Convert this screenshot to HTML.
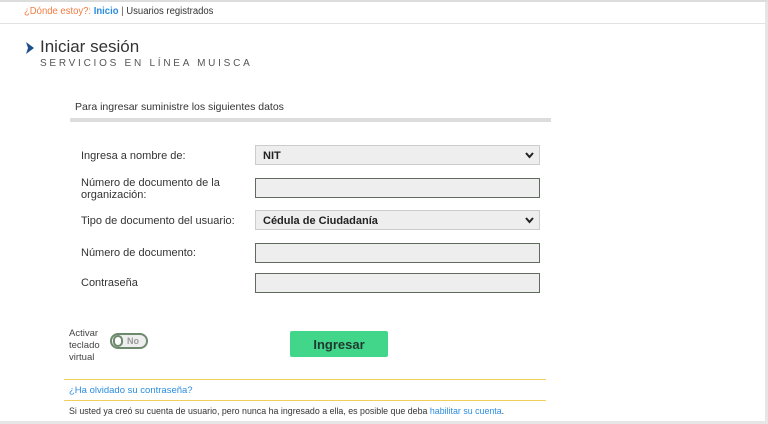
<!DOCTYPE html>
<html><head><meta charset="utf-8"><style>
*{margin:0;padding:0;box-sizing:border-box}
body{width:768px;height:424px;background:#fff;font-family:"Liberation Sans",sans-serif;position:relative;overflow:hidden;color:#333}
.a{position:absolute}
.lbl{font-size:11px;color:#333;left:81px}
.inp{left:255px;width:285px;height:20px;background:#eee;border:1px solid #5f6b5f}
.sel{left:255px;width:285px;height:20px;background:#eee;border:1px solid #ccc;font-size:11px;font-weight:bold;color:#222;padding:4px 0 0 7px}
.sel svg{position:absolute;right:5px;top:6px}
</style></head><body>
<div class="a" style="left:0;top:0;width:768px;height:2px;background:#ddd"></div>
<div class="a" style="left:0;top:23px;width:766px;height:1px;background:#e2e2e2"></div>
<div class="a" style="left:765px;top:2px;width:3px;height:422px;background:#e6e6e6"></div>
<div class="a" style="left:0;top:421px;width:768px;height:3px;background:#e6e6e6"></div>
<div class="a" style="left:24px;top:6px;font-size:10px;transform:scaleX(0.95);transform-origin:left"><span style="color:#f47c43">¿Dónde estoy?:</span> <span style="color:#2b8de0;font-weight:bold">Inicio</span> <span style="color:#555">|</span> <span style="color:#333">Usuarios registrados</span></div>
<svg class="a" style="left:25px;top:41px" width="10" height="14"><path d="M1 1 L9 7 L1 13 L3 7Z" fill="#1d4f8c"/></svg>
<div class="a" style="left:40px;top:37px;font-size:17px;color:#333">Iniciar sesión</div>
<div class="a" style="left:40px;top:58px;font-size:10px;letter-spacing:2.75px;color:#555">SERVICIOS EN LÍNEA MUISCA</div>
<div class="a" style="left:75px;top:101px;font-size:10.5px;color:#333">Para ingresar suministre los siguientes datos</div>
<div class="a" style="left:70px;top:118px;width:481px;height:4px;background:#ddd"></div>
<div class="a lbl" style="top:150px">Ingresa a nombre de:</div>
<div class="a sel" style="top:145px">NIT<svg width="9" height="7"><path d="M1 1L4.5 5L8 1" stroke="#222" stroke-width="2" fill="none"/></svg></div>
<div class="a lbl" style="top:177px;line-height:12px">Número de documento de la<br>organización:</div>
<div class="a inp" style="top:178px"></div>
<div class="a lbl" style="top:215px">Tipo de documento del usuario:</div>
<div class="a sel" style="top:210px">Cédula de Ciudadanía<svg width="9" height="7"><path d="M1 1L4.5 5L8 1" stroke="#222" stroke-width="2" fill="none"/></svg></div>
<div class="a lbl" style="top:247px">Número de documento:</div>
<div class="a inp" style="top:243px"></div>
<div class="a lbl" style="top:277px">Contraseña</div>
<div class="a inp" style="top:273px"></div>
<div class="a" style="left:69px;top:328px;font-size:9.5px;line-height:12px;color:#444">Activar<br>teclado<br>virtual</div>
<div class="a" style="left:110px;top:333px;width:38px;height:16px;border:2px solid #6e8a6e;border-radius:8px;background:#eee"></div>
<div class="a" style="left:113px;top:335px;width:10px;height:12px;border:2px solid #6e8a6e;border-radius:6px;background:#fff"></div>
<div class="a" style="left:127px;top:336px;font-size:9px;font-weight:bold;color:#999">No</div>
<div class="a" style="left:290px;top:331px;width:98px;height:26px;background:#42d68b;border-radius:2px;text-align:center;font-size:13px;font-weight:bold;color:#1e3a2e;line-height:27px">Ingresar</div>
<div class="a" style="left:64px;top:379px;width:482px;height:1px;background:#f0cf5a"></div>
<div class="a" style="left:69px;top:385px;font-size:9.5px;color:#2b8de0">¿Ha olvidado su contraseña?</div>
<div class="a" style="left:64px;top:400px;width:482px;height:1px;background:#f0cf5a"></div>
<div class="a" style="left:69px;top:406px;font-size:8.85px;color:#333">Si usted ya creó su cuenta de usuario, pero nunca ha ingresado a ella, es posible que deba <span style="color:#2b8de0">habilitar su cuenta</span>.</div>
</body></html>
